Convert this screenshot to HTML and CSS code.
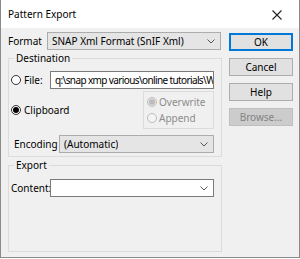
FILE: index.html
```html
<!DOCTYPE html>
<html>
<head>
<meta charset="utf-8">
<link rel="stylesheet" href="styles.css">
</head>
<body>
<div class="window">
  <div class="titlebar">
    <span class="title">Pattern Export</span>
    <svg class="close" width="10" height="10" viewBox="0 0 10 10"><path d="M0.5 0.5 L9.5 9.5 M9.5 0.5 L0.5 9.5" stroke="#222" stroke-width="1.1" fill="none"/></svg>
  </div>
  <div class="body">
    <div class="main">
      <div class="format-row">
        <span class="lbl format-lbl">Format</span>
        <div class="combo combo-ro format-combo"><span class="combo-text">SNAP Xml Format (SnIF Xml)</span><svg class="chev" width="8" height="5" viewBox="0 0 8 5"><path d="M0.5 0.5 L4 4 L7.5 0.5" stroke="#555" stroke-width="1" fill="none"/></svg></div>
      </div>
      <fieldset class="group dest">
        <legend>Destination</legend>
        <div class="file-row">
          <span class="radio"></span><span class="lbl file-lbl">File:</span>
          <div class="textbox">q:\snap xmp various\online tutorials\W</div>
        </div>
        <div class="clip-row">
          <span class="radio checked"></span><span class="lbl clip-lbl">Clipboard</span>
          <div class="subgroup">
            <div class="sub-opt"><span class="radio disabled checked"></span><span class="lbl dis">Overwrite</span></div>
            <div class="sub-opt"><span class="radio disabled"></span><span class="lbl dis">Append</span></div>
          </div>
        </div>
        <div class="enc-row">
          <span class="lbl enc-lbl">Encoding</span>
          <div class="combo combo-ro enc-combo"><span class="combo-text">(Automatic)</span><svg class="chev" width="8" height="5" viewBox="0 0 8 5"><path d="M0.5 0.5 L4 4 L7.5 0.5" stroke="#555" stroke-width="1" fill="none"/></svg></div>
        </div>
      </fieldset>
      <fieldset class="group export">
        <legend>Export</legend>
        <div class="content-row">
          <span class="lbl content-lbl">Content:</span>
          <div class="combo combo-edit content-combo"><span class="combo-text"></span><svg class="chev" width="8" height="5" viewBox="0 0 8 5"><path d="M0.5 0.5 L4 4 L7.5 0.5" stroke="#555" stroke-width="1" fill="none"/></svg></div>
        </div>
      </fieldset>
    </div>
    <div class="buttons">
      <div class="btn default">OK</div>
      <div class="btn">Cancel</div>
      <div class="btn">Help</div>
      <div class="btn disabled">Browse...</div>
    </div>
  </div>
</div>
</body>
</html>
```
FILE: styles.css
```css
* { box-sizing: border-box; }
html, body { margin: 0; padding: 0; background: #ffffff; }
body {
  font-family: "Noto Sans", "Open Sans", sans-serif;
  font-size: 10px;
  color: #000;
}
.window {
  width: 300px;
  height: 258px;
  background: #f0f0f0;
  border-left: 1px solid #8a8a8a;
  border-right: 1px solid #8a8a8a;
  border-bottom: 1px solid #8a8a8a;
  display: flex;
  flex-direction: column;
}
.titlebar {
  height: 28px;
  background: #ffffff;
  display: flex;
  align-items: center;
  justify-content: space-between;
  padding: 0 17px 0 7px;
  flex: none;
}
.title { font-size: 10px; }
.close { margin-top: 1px; }
.body {
  display: flex;
  gap: 7px;
  padding-left: 7px;
}
.main { width: 214px; min-width: 0; flex: none; }
.lbl { line-height: 12px; white-space: nowrap; }
.format-row {
  margin-top: 4px;
  display: flex;
  align-items: center;
}
.format-lbl { width: 39px; flex: none; }
.combo {
  height: 18px;
  display: flex;
  align-items: center;
  justify-content: space-between;
  padding: 0 5px 0 4px;
  min-width: 0;
}
.combo-ro { background: #e5e5e5; border: 1px solid #acacac; }
.combo-edit { background: #ffffff; border: 1px solid #7a7a7a; }
.combo-text { white-space: nowrap; overflow: hidden; }
.format-combo { width: 174px; flex: none; }
.group {
  margin: 0;
  border: 1px solid #dcdcdc;
  padding: 0 7px 0 2px;
  width: 214px;
  min-width: 0;
}
.group legend {
  padding: 0 2px;
  margin-left: 3px;
  line-height: 12px;
}
.dest { margin-top: 2px; padding-top: 7px; padding-bottom: 3px; }
.export { margin-top: 2px; padding-top: 8px; height: 93px; }
.radio {
  width: 10px;
  height: 10px;
  border-radius: 50%;
  border: 1px solid #333;
  background: #fff;
  display: inline-flex;
  align-items: center;
  justify-content: center;
  flex: none;
}
.radio.checked::after {
  content: "";
  width: 6px;
  height: 6px;
  border-radius: 50%;
  background: #000;
}
.radio.disabled { border-color: #bcbcbc; background: #f4f4f4; }
.radio.disabled.checked { background: #e6e6e6; }
.radio.disabled.checked::after { background: #bcbcbc; }
.file-row, .clip-row, .enc-row, .content-row {
  display: flex;
  align-items: center;
}
.file-lbl { margin-left: 3px; width: 26px; flex: none; }
.textbox {
  flex: 1;
  min-width: 0;
  height: 18px;
  background: #fff;
  border: 1px solid #7a7a7a;
  padding: 0 0 0 4px;
  line-height: 16px;
  white-space: nowrap;
  overflow: hidden;
  letter-spacing: -0.62px;
}
.clip-row { margin-top: 2px; height: 38px; }
.clip-lbl { margin-left: 3px; flex: 1; }
.subgroup {
  width: 71px;
  height: 38px;
  flex: none;
  border: 1px solid #dcdcdc;
  display: flex;
  flex-direction: column;
  justify-content: center;
  gap: 4px;
  padding-left: 3px;
}
.sub-opt { display: flex; align-items: center; gap: 2px; }
.dis { color: #8d8d8d; }
.enc-row { margin-top: 6px; }
.enc-lbl { margin-left: 3px; width: 45px; flex: none; }
.enc-combo { flex: 1; }
.content-lbl { margin-left: 0; width: 39px; flex: none; }
.content-combo { flex: 1; }
.buttons {
  display: flex;
  flex-direction: column;
  gap: 7px;
  margin-top: 5px;
}
.btn {
  width: 64px;
  height: 18px;
  background: #e1e1e1;
  border: 1px solid #adadad;
  display: flex;
  align-items: center;
  justify-content: center;
}
.btn.default { border-color: #0078d7; box-shadow: inset 0 0 0 1px #0078d7; }
.btn.disabled { background: #cccccc; border-color: #bfbfbf; color: #838383; }
```
